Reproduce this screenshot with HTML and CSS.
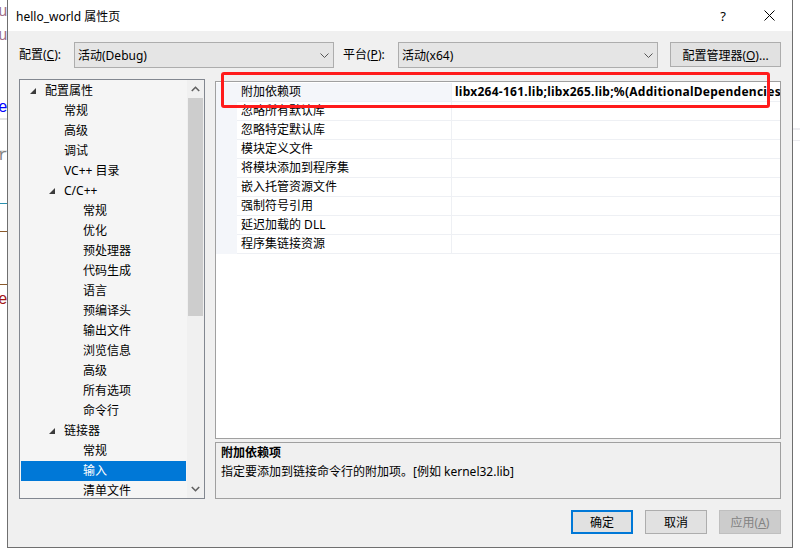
FILE: index.html
```html
<!DOCTYPE html>
<html lang="zh-CN">
<head>
<meta charset="utf-8">
<title>hello_world 属性页</title>
<link rel="stylesheet" href="styles.css">
</head>
<body>
<div class="screen">
  <!-- code editor peeking out behind the dialog -->
  <div class="editor-strip">
    <div class="ed-line ed-str">u</div>
    <div class="ed-line ed-str">u</div>
    <div class="ed-line"></div>
    <div class="ed-line"></div>
    <div class="ed-line ed-kw">e</div>
    <div class="ed-line"></div>
    <div class="ed-line ed-gray">r</div>
    <div class="ed-line"></div>
    <div class="ed-line"></div>
    <div class="ed-line"></div>
    <div class="ed-line"></div>
    <div class="ed-line"></div>
    <div class="ed-line ed-red">e</div>
  </div>

  <div class="dialog">
    <div class="titlebar">
      <span class="title">hello_world 属性页</span>
      <span class="help">?</span>
      <span class="close">
        <svg width="11" height="11" viewBox="0 0 11 11"><path d="M0.5 0.5 L10.5 10.5 M10.5 0.5 L0.5 10.5" stroke="#000" stroke-width="1" fill="none"/></svg>
      </span>
    </div>

    <div class="body">
      <div class="config-row">
        <span class="label">配置(<u>C</u>):</span>
        <div class="combo">
          <span class="combo-text">活动(Debug)</span>
          <svg class="chev" width="9" height="5" viewBox="0 0 9 5"><polyline points="0.5,0.5 4.5,4.5 8.5,0.5" fill="none" stroke="#555" stroke-width="1"/></svg>
        </div>
        <span class="label label2">平台(<u>P</u>):</span>
        <div class="combo">
          <span class="combo-text">活动(x64)</span>
          <svg class="chev" width="9" height="5" viewBox="0 0 9 5"><polyline points="0.5,0.5 4.5,4.5 8.5,0.5" fill="none" stroke="#555" stroke-width="1"/></svg>
        </div>
        <button class="btn mgr-btn">配置管理器(<u>O</u>)...</button>
      </div>

      <div class="main">
        <div class="tree">
          <div class="tree-list">
            <div class="node l0 open">配置属性</div>
            <div class="node l1">常规</div>
            <div class="node l1">高级</div>
            <div class="node l1">调试</div>
            <div class="node l1">VC++ 目录</div>
            <div class="node l1 open">C/C++</div>
            <div class="node l2">常规</div>
            <div class="node l2">优化</div>
            <div class="node l2">预处理器</div>
            <div class="node l2">代码生成</div>
            <div class="node l2">语言</div>
            <div class="node l2">预编译头</div>
            <div class="node l2">输出文件</div>
            <div class="node l2">浏览信息</div>
            <div class="node l2">高级</div>
            <div class="node l2">所有选项</div>
            <div class="node l2">命令行</div>
            <div class="node l1 open">链接器</div>
            <div class="node l2">常规</div>
            <div class="node l2 selected">输入</div>
            <div class="node l2">清单文件</div>
          </div>
          <div class="vscroll">
            <div class="sb-arrow">
              <svg width="9" height="6" viewBox="0 0 9 6"><polyline points="0.8,5 4.5,1.3 8.2,5" fill="none" stroke="#606060" stroke-width="1.6"/></svg>
            </div>
            <div class="sb-thumb"></div>
            <div class="sb-track"></div>
            <div class="sb-arrow">
              <svg width="9" height="6" viewBox="0 0 9 6"><polyline points="0.8,1 4.5,4.7 8.2,1" fill="none" stroke="#606060" stroke-width="1.6"/></svg>
            </div>
          </div>
        </div>

        <div class="right">
          <div class="grid">
            <div class="prop first">
              <div class="gutter"></div>
              <div class="pname">附加依赖项</div>
              <div class="pval bold wide">libx264-161.lib;libx265.lib;%(AdditionalDependencies)</div>
            </div>
            <div class="prop">
              <div class="gutter"></div>
              <div class="pname">忽略所有默认库</div>
              <div class="pval"></div>
            </div>
            <div class="prop">
              <div class="gutter"></div>
              <div class="pname">忽略特定默认库</div>
              <div class="pval"></div>
            </div>
            <div class="prop">
              <div class="gutter"></div>
              <div class="pname">模块定义文件</div>
              <div class="pval"></div>
            </div>
            <div class="prop">
              <div class="gutter"></div>
              <div class="pname">将模块添加到程序集</div>
              <div class="pval"></div>
            </div>
            <div class="prop">
              <div class="gutter"></div>
              <div class="pname">嵌入托管资源文件</div>
              <div class="pval"></div>
            </div>
            <div class="prop">
              <div class="gutter"></div>
              <div class="pname">强制符号引用</div>
              <div class="pval"></div>
            </div>
            <div class="prop">
              <div class="gutter"></div>
              <div class="pname">延迟加载的 DLL</div>
              <div class="pval"></div>
            </div>
            <div class="prop">
              <div class="gutter"></div>
              <div class="pname">程序集链接资源</div>
              <div class="pval"></div>
            </div>
            <!-- highlight frame around the edited property -->
            <div class="highlight"></div>
          </div>
          <div class="desc">
            <div class="desc-title">附加依赖项</div>
            <div class="desc-text">指定要添加到链接命令行的附加项。[例如 kernel32.lib]</div>
          </div>
        </div>
      </div>

      <div class="buttons">
        <button class="btn dlg-btn default">确定</button>
        <button class="btn dlg-btn">取消</button>
        <button class="btn dlg-btn disabled">应用(<u>A</u>)</button>
      </div>
    </div>
  </div>

  <div class="right-strip"></div>
</div>
</body>
</html>
```

FILE: styles.css
```css
html, body {
  margin: 0;
  padding: 0;
}

body {
  width: 800px;
  height: 555px;
  overflow: hidden;
  background: #ffffff;
  font-family: "Noto Sans", "Noto Sans CJK SC", sans-serif;
  font-size: 12px;
  color: #000;
}

.screen {
  display: flex;
  height: 555px;
}

/* ---------- editor behind the dialog ---------- */
.editor-strip {
  width: 7px;
  flex: none;
  overflow: hidden;
  display: flex;
  flex-direction: column;
  background:
    linear-gradient(#e4e4e4, #e4e4e4) 0 118px / 100% 2px no-repeat,
    linear-gradient(#e8e8e8, #e8e8e8) 0 150px / 100% 2px no-repeat,
    linear-gradient(#2b91af, #2b91af) 0 203px / 100% 1px no-repeat,
    linear-gradient(#8a5a2b, #8a5a2b) 0 231px / 100% 1px no-repeat,
    linear-gradient(#8a5a2b, #8a5a2b) 0 284px / 100% 1px no-repeat,
    #ffffff;
}

.ed-line {
  height: 24px;
  line-height: 24px;
  font-family: "Liberation Mono", monospace;
  font-size: 16px;
  white-space: nowrap;
  margin-left: -2px;
  flex: none;
}

.ed-str { color: #a0708a; }
.ed-kw { color: #0000ff; }
.ed-gray { color: #808080; }
.ed-red { color: #a31515; }

.right-strip {
  flex: 1;
  background:
    linear-gradient(#ececf0, #ececf0) 0 128px / 100% 2px no-repeat,
    linear-gradient(#ececf0, #ececf0) 0 140px / 100% 1px no-repeat,
    #ffffff;
}

/* ---------- dialog frame ---------- */
.dialog {
  width: 786px;
  height: 548px;
  flex: none;
  box-sizing: border-box;
  border: 1px solid #6f6f6f;
  border-top: none;
  background: #f0f0f0;
  display: flex;
  flex-direction: column;
}

.titlebar {
  height: 31px;
  flex: none;
  background: #ffffff;
  display: flex;
  align-items: center;
  padding-left: 8px;
}

.title {
  flex: 1;
  font-size: 12px;
}

.help {
  width: 46px;
  text-align: center;
  font-size: 13px;
}

.close {
  width: 46px;
  display: flex;
  justify-content: center;
  align-items: center;
}

.body {
  flex: 1;
  padding: 11px 11px 0;
  display: flex;
  flex-direction: column;
}

/* ---------- configuration row ---------- */
.config-row {
  display: flex;
  align-items: flex-start;
  height: 26px;
}

.label {
  width: 55px;
  line-height: 26px;
  flex: none;
}

.label2 {
  margin-left: 9px;
}

.combo {
  width: 260px;
  height: 26px;
  flex: none;
  box-sizing: border-box;
  border: 1px solid #adadad;
  background: #e5e5e5;
  display: flex;
  align-items: center;
  padding: 0 4px 0 3px;
}

.combo-text {
  flex: 1;
}

.chev {
  display: block;
}

.btn {
  font-family: inherit;
  font-size: 12px;
  color: #000;
  background: #e1e1e1;
  border: 1px solid #adadad;
  box-sizing: border-box;
  padding: 0;
  margin: 0;
}

.mgr-btn {
  margin-left: 12px;
  width: 111px;
  height: 25px;
}

/* ---------- main area ---------- */
.main {
  display: flex;
  gap: 10px;
  margin-top: 11px;
  height: 420px;
}

.tree {
  width: 186px;
  flex: none;
  box-sizing: border-box;
  border: 1px solid #828790;
  background: #f5f5f5;
  display: flex;
  overflow: hidden;
}

.tree-list {
  flex: 1;
  overflow: hidden;
  padding-top: 1px;
}

.node {
  position: relative;
  height: 20px;
  line-height: 20px;
  margin: 0 1px;
  white-space: nowrap;
}

.node.l0 { padding-left: 24px; }
.node.l1 { padding-left: 43px; }
.node.l2 { padding-left: 62px; }

/* expanded-node marker: small solid corner triangle */
.node.open::before {
  content: "";
  position: absolute;
  top: 7px;
  width: 0;
  height: 0;
  border-style: solid;
  border-width: 0 0 6px 6px;
  border-color: transparent transparent #3c3c3c transparent;
}

.node.l0.open::before { left: 9px; }
.node.l1.open::before { left: 28px; }

.node.selected {
  background: #0078d7;
  color: #ffffff;
}

.vscroll {
  width: 17px;
  flex: none;
  background: #f0f0f0;
  display: flex;
  flex-direction: column;
}

.sb-arrow {
  height: 18px;
  flex: none;
  display: flex;
  align-items: center;
  justify-content: center;
}

.sb-arrow svg {
  display: block;
}

.sb-thumb {
  height: 218px;
  margin: 0 1px;
  background: #cdcdcd;
  flex: none;
}

.sb-track {
  flex: 1;
}

/* ---------- property grid ---------- */
.right {
  width: 566px;
  flex: none;
  display: flex;
  flex-direction: column;
}

.grid {
  position: relative;
  margin-top: 2px;
  height: 358px;
  flex: none;
  box-sizing: border-box;
  border: 1px solid #a0a0a0;
  background: #ffffff;
  padding-top: 1px;
}

.prop {
  display: grid;
  grid-template-columns: 21px 215px 1fr;
  height: 19px;
}

.gutter {
  background: #f4f6fa;
}

.pname,
.pval {
  box-sizing: border-box;
  border-bottom: 1px solid #eef0f4;
  line-height: 18px;
  white-space: nowrap;
  overflow: hidden;
}

.pname {
  padding-left: 4px;
  border-right: 1px solid #eef0f4;
}

.pval {
  padding-left: 3px;
}

.prop.first .pname {
  background: #f4f6fa;
}

.bold {
  font-weight: bold;
}

.wide {
  letter-spacing: 0.26px;
}

.highlight {
  position: absolute;
  left: 5px;
  top: -10px;
  width: 549px;
  height: 36px;
  box-sizing: border-box;
  border: 3px solid #ff1b1b;
  border-radius: 3px;
}

/* ---------- description panel ---------- */
.desc {
  margin-top: 3px;
  height: 57px;
  flex: none;
  box-sizing: border-box;
  border: 1px solid #a0a0a0;
  background: #f0f0f0;
  padding: 0 5px;
  line-height: 19px;
}

.desc-title {
  font-weight: bold;
}

/* ---------- dialog buttons ---------- */
.buttons {
  display: flex;
  justify-content: flex-end;
  gap: 12px;
  margin-top: 11px;
  height: 24px;
}

.dlg-btn {
  width: 62px;
  height: 24px;
}

.dlg-btn.default {
  border: 2px solid #0078d7;
}

.dlg-btn.disabled {
  background: #cccccc;
  border-color: #bfbfbf;
  color: #838383;
}
```
